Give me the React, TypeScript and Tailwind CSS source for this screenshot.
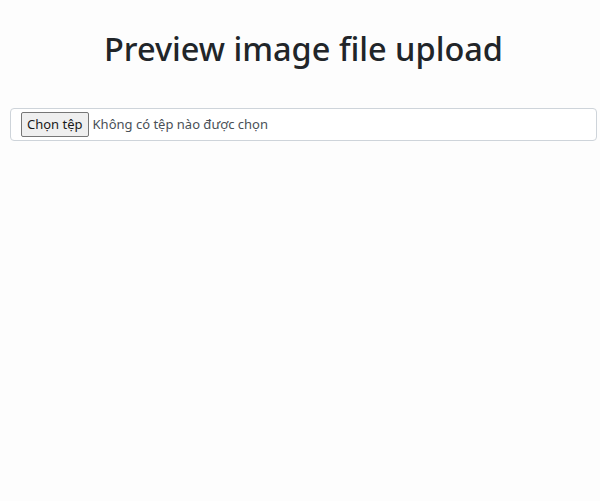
import React from 'react';

const App = () => {
  return (
    <div
      className="min-h-[501px] bg-[#fdfdfd] pt-[26px]"
      style={{ fontFamily: '"Noto Sans", "Open Sans", sans-serif' }}
    >
      <div className="ml-[10px] mr-[3px]">
        {/* Title */}
        <h1 className="text-center text-[32.5px] leading-[46px] font-medium text-[#212529]">
          Preview image file upload
        </h1>

        {/* File input */}
        <div className="mt-[36px] flex h-[33px] items-center rounded-[4px] border border-[#ced4da] bg-white pl-[10px]">
          <span className="flex h-[25px] items-center rounded-[2px] border border-[#767676] bg-[#efefef] px-[5px] text-[13px] text-[#1a1a1a]">
            Chọn tệp
          </span>
          <span className="ml-[4px] text-[13px] text-[#495057]">
            Không có tệp nào được chọn
          </span>
        </div>
      </div>
    </div>
  );
};

export default App;
